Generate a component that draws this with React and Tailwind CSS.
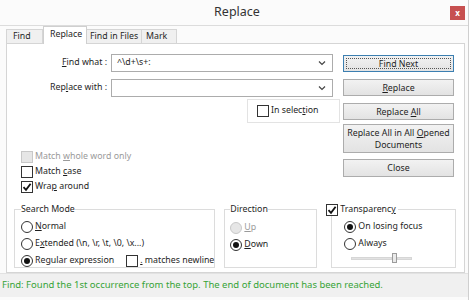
import React from "react";

function CheckBox({ checked, disabled }) {
  return (
    <span
      className={
        "inline-flex items-center justify-center w-[12px] h-[12px] shrink-0 border " +
        (disabled ? "border-[#c8c8c8] bg-[#e6e6e6]" : "border-[#333] bg-white")
      }
    >
      {checked && (
        <svg width="10" height="10" viewBox="0 0 10 10">
          <path d="M1.5 5.2 L4 7.8 L8.6 1.8" fill="none" stroke="#111" strokeWidth="1.8" />
        </svg>
      )}
    </span>
  );
}

function Radio({ checked, disabled }) {
  return (
    <span
      className={
        "inline-flex items-center justify-center w-[12px] h-[12px] shrink-0 rounded-full border " +
        (disabled ? "border-[#c8c8c8] bg-[#e6e6e6]" : "border-[#333] bg-white")
      }
    >
      {checked && <span className="w-[6px] h-[6px] rounded-full bg-[#111]" />}
    </span>
  );
}

function Btn({ children, className = "", primary }) {
  return (
    <div
      className={
        "flex items-center justify-center text-center leading-[12px] border bg-gradient-to-b from-[#f2f2f2] to-[#e3e3e3] " +
        (primary ? "border-[#3c7fb1] p-[2px] " : "border-[#acacac] ") +
        className
      }
    >
      {primary ? (
        <div className="w-full h-full flex items-center justify-center border border-dotted border-[#555]">
          {children}
        </div>
      ) : (
        children
      )}
    </div>
  );
}

function Combo({ value }) {
  return (
    <div className="w-[222px] h-[18px] border border-[#acacac] bg-white flex items-center pl-[5px] pr-[6px]">
      <span className="flex-1">{value}</span>
      <svg width="8" height="6" viewBox="0 0 8 6">
        <path d="M1 1.5 L4 4.5 L7 1.5" fill="none" stroke="#444" strokeWidth="1.2" />
      </svg>
    </div>
  );
}

export default function App() {
  return (
    <div className="w-[474px] h-[304px] bg-white overflow-hidden whitespace-nowrap font-['Noto_Sans',sans-serif] text-[8.8px] text-[#1e1e1e]">
      <div className="w-[469px] h-[300px] bg-[#fbfbfb] border-r border-[#cfcfcf] flex flex-col">
        {/* Title bar */}
        <div className="h-[26px] shrink-0 border-b border-[#dcdcdc] flex items-center">
          <div className="flex-1 text-center pl-[24px] text-[12.5px] text-[#333]">Replace</div>
          <div className="w-[15px] h-[14px] mr-[3px] bg-[#c75050] text-white text-[8px] font-bold flex items-center justify-center">
            x
          </div>
        </div>

        {/* Tabs */}
        <div className="h-[17px] shrink-0 flex items-end pl-[6px]">
          <div className="w-[37px] h-[14px] border border-b-0 border-[#d5d5d5] bg-[#f0f0f0] pl-[6px] leading-[13px]">Find</div>
          <div className="w-[44px] h-[18px] -mb-px relative z-10 border border-b-0 border-[#cfcfcf] bg-white pl-[6px] leading-[15px]">
            Replace
          </div>
          <div className="w-[55px] h-[14px] border border-b-0 border-l-0 border-[#d5d5d5] bg-[#f0f0f0] pl-[3px] leading-[13px]">
            Find in Files
          </div>
          <div className="w-[35px] h-[14px] border border-b-0 border-l-0 border-[#d5d5d5] bg-[#f0f0f0] pl-[4px] leading-[13px]">
            Mark
          </div>
        </div>

        {/* Panel */}
        <div className="ml-[6px] w-[459px] h-[230px] shrink-0 border border-[#d5d5d5] bg-white pt-[10px]">
          <div className="flex">
            {/* left column */}
            <div className="w-[333px]">
              <div className="flex items-center h-[18px]">
                <div className="w-[100px] text-right">
                  <u>F</u>ind what :
                </div>
                <div className="ml-[4px]">
                  <Combo value="^\d+\s+:" />
                </div>
              </div>
              <div className="flex items-center h-[18px] mt-[7px]">
                <div className="w-[100px] text-right">
                  Rep<u>l</u>ace with :
                </div>
                <div className="ml-[4px]">
                  <Combo value="" />
                </div>
              </div>
              <div className="ml-[240px] mt-[2px] w-[93px] h-[24px] border border-[#e3e3e3] flex items-center pl-[9px] gap-[2px]">
                <CheckBox />
                <span>
                  In selec<u>t</u>ion
                </span>
              </div>
              <div className="mt-[26px] pl-[14px]">
                <div className="h-[15px] flex items-center gap-[2px] text-[#9a9a9a]">
                  <CheckBox disabled />
                  <span>
                    Match <u>w</u>hole word only
                  </span>
                </div>
                <div className="h-[15px] flex items-center gap-[2px]">
                  <CheckBox />
                  <span>
                    Match <u>c</u>ase
                  </span>
                </div>
                <div className="h-[15px] flex items-center gap-[2px]">
                  <CheckBox checked />
                  <span>
                    Wra<u>p</u> around
                  </span>
                </div>
              </div>
            </div>

            {/* right column buttons */}
            <div className="ml-[3px] w-[111px]">
              <Btn primary className="h-[17px] mt-[1px]">Find Next</Btn>
              <Btn className="h-[17px] mt-[7px]">
                <span>
                  <u>R</u>eplace
                </span>
              </Btn>
              <Btn className="h-[17px] mt-[7px]">
                <span>
                  Replace <u>A</u>ll
                </span>
              </Btn>
              <Btn className="h-[29px] mt-[4px]">
                <span>
                  Replace All in All <u>O</u>pened
                  <br />
                  Documents
                </span>
              </Btn>
              <Btn className="h-[18px] mt-[6px]">Close</Btn>
            </div>
          </div>

          {/* Group boxes */}
          <div className="flex mt-[9px] pl-[7px]">
            <fieldset className="w-[200px] h-[65px] border border-[#dcdcdc]">
              <legend className="ml-[6px] leading-[13px]">Search Mode</legend>
              <div className="pl-[6px] pt-[2px]">
                <div className="h-[17px] flex items-center gap-[2px]">
                  <Radio />
                  <span>
                    <u>N</u>ormal
                  </span>
                </div>
                <div className="h-[17px] flex items-center gap-[2px]">
                  <Radio />
                  <span>
                    E<u>x</u>tended (\n, \r, \t, \0, \x...)
                  </span>
                </div>
                <div className="h-[17px] flex items-center gap-[2px]">
                  <Radio checked />
                  <span>
                    Re<u>g</u>ular expression
                  </span>
                  <span className="ml-[10px] flex items-center gap-[2px]">
                    <CheckBox />
                    <span>
                      <u>.</u> matches newline
                    </span>
                  </span>
                </div>
              </div>
            </fieldset>

            <fieldset className="ml-[9px] w-[93px] h-[65px] border border-[#dcdcdc]">
              <legend className="ml-[5px] leading-[13px]">Direction</legend>
              <div className="pl-[5px] pt-[3px]">
                <div className="h-[17px] flex items-center gap-[2px] text-[#9a9a9a]">
                  <Radio disabled />
                  <span>
                    <u>U</u>p
                  </span>
                </div>
                <div className="h-[17px] flex items-center gap-[2px]">
                  <Radio checked />
                  <span>
                    <u>D</u>own
                  </span>
                </div>
              </div>
            </fieldset>

            <fieldset className="ml-[14px] w-[125px] h-[65px] border border-[#dcdcdc]">
              <legend className="-ml-[6px] leading-[13px] flex items-center gap-[2px] pr-[2px]">
                <CheckBox checked />
                <span>
                  Transparenc<u>y</u>
                </span>
              </legend>
              <div className="pl-[12px] pt-[2px]">
                <div className="h-[17px] flex items-center gap-[2px]">
                  <Radio checked />
                  <span>On losing focus</span>
                </div>
                <div className="h-[17px] flex items-center gap-[2px]">
                  <Radio />
                  <span>Always</span>
                </div>
                <div className="h-[12px] flex items-center pl-[7px]">
                  <div className="w-[41px] h-[3px] bg-[#e2e2e2] border border-[#d6d6d6]" />
                  <div className="w-[5px] h-[10px] bg-[#eaeaea] border border-[#9c9c9c]" />
                  <div className="w-[15px] h-[3px] bg-[#e2e2e2] border border-[#d6d6d6]" />
                </div>
              </div>
            </fieldset>
          </div>
        </div>

        {/* Status bar */}
        <div className="h-[24px] shrink-0 bg-[#f0f0f0] border-t border-[#e2e2e2] flex items-center pl-[2px] text-[9.5px] text-[#36a336]">
          Find: Found the 1st occurrence from the top. The end of document has been reached.
        </div>
      </div>
    </div>
  );
}
